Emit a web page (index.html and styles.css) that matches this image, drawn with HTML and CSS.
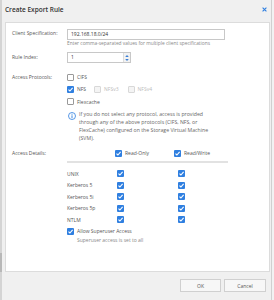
FILE: index.html
```html
<!DOCTYPE html>
<html>
<head>
<meta charset="utf-8">
<link rel="stylesheet" href="styles.css">
</head>
<body>
<div class="dialog">
  <div class="side"></div>
  <div class="main">
    <div class="header">
      <span class="title">Create Export Rule</span>
      <svg class="close" width="5" height="5" viewBox="0 0 5 5"><path d="M0.6 0.6 L4.4 4.4 M4.4 0.6 L0.6 4.4" stroke="#2f7fe0" stroke-width="1.1"/></svg>
    </div>
    <div class="panel">
      <div class="row r-client">
        <div class="label">Client Specification:</div>
        <div class="field">
          <div class="input wide">192.168.18.0/24</div>
          <div class="hint">Enter comma-separated values for multiple client specifications</div>
        </div>
      </div>
      <div class="row r-index">
        <div class="label">Rule Index:</div>
        <div class="field">
          <div class="input narrow"><span class="val">1</span>
            <span class="spin"><svg width="6" height="10" viewBox="0 0 6 10"><path d="M1.2 4 L3 2 L4.8 4Z M1.2 6 L3 8 L4.8 6Z" fill="#3b7fd6"/></svg></span>
          </div>
        </div>
      </div>
      <div class="row r-proto">
        <div class="label">Access Protocols:</div>
        <div class="field">
          <div class="opt"><span class="cb"></span><span>CIFS</span></div>
          <div class="opt"><span class="cb on"><svg viewBox="0 0 7 7"><path d="M1.5 3.6 L2.9 5 L5.6 1.9" fill="none" stroke="#fff" stroke-width="1.1"/></svg></span><span>NFS</span>
            <span class="cb dis sub"></span><span class="dtext">NFSv3</span>
            <span class="cb dis sub2"></span><span class="dtext">NFSv4</span></div>
          <div class="opt"><span class="cb"></span><span>Flexcache</span></div>
          <div class="info">
            <svg class="icon" width="8" height="8" viewBox="0 0 8 8"><circle cx="4" cy="4" r="3.5" fill="none" stroke="#2f7fe0" stroke-width="0.8"/><rect x="3.55" y="3.3" width="0.9" height="2.8" fill="#2f7fe0"/><rect x="3.55" y="1.8" width="0.9" height="0.9" fill="#2f7fe0"/></svg>
            <p>If you do not select any protocol, access is provided<br>through any of the above protocols (CIFS, NFS, or<br>FlexCache) configured on the Storage Virtual Machine<br>(SVM).</p>
          </div>
        </div>
      </div>
      <div class="row r-details">
        <div class="label">Access Details:</div>
        <div class="field">
          <div class="dhead">
            <div class="hcol ro"><span class="cb on"><svg viewBox="0 0 7 7"><path d="M1.5 3.6 L2.9 5 L5.6 1.9" fill="none" stroke="#fff" stroke-width="1.1"/></svg></span><span>Read-Only</span></div>
            <div class="hcol"><span class="cb on"><svg viewBox="0 0 7 7"><path d="M1.5 3.6 L2.9 5 L5.6 1.9" fill="none" stroke="#fff" stroke-width="1.1"/></svg></span><span>Read/Write</span></div>
          </div>
          <div class="drow"><span class="dname">UNIX</span><span class="cb on c1"><svg viewBox="0 0 7 7"><path d="M1.5 3.6 L2.9 5 L5.6 1.9" fill="none" stroke="#fff" stroke-width="1.1"/></svg></span><span class="cb on c2"><svg viewBox="0 0 7 7"><path d="M1.5 3.6 L2.9 5 L5.6 1.9" fill="none" stroke="#fff" stroke-width="1.1"/></svg></span></div>
          <div class="drow"><span class="dname">Kerberos 5</span><span class="cb on c1"><svg viewBox="0 0 7 7"><path d="M1.5 3.6 L2.9 5 L5.6 1.9" fill="none" stroke="#fff" stroke-width="1.1"/></svg></span><span class="cb on c2"><svg viewBox="0 0 7 7"><path d="M1.5 3.6 L2.9 5 L5.6 1.9" fill="none" stroke="#fff" stroke-width="1.1"/></svg></span></div>
          <div class="drow"><span class="dname">Kerberos 5i</span><span class="cb on c1"><svg viewBox="0 0 7 7"><path d="M1.5 3.6 L2.9 5 L5.6 1.9" fill="none" stroke="#fff" stroke-width="1.1"/></svg></span><span class="cb on c2"><svg viewBox="0 0 7 7"><path d="M1.5 3.6 L2.9 5 L5.6 1.9" fill="none" stroke="#fff" stroke-width="1.1"/></svg></span></div>
          <div class="drow"><span class="dname">Kerberos 5p</span><span class="cb on c1"><svg viewBox="0 0 7 7"><path d="M1.5 3.6 L2.9 5 L5.6 1.9" fill="none" stroke="#fff" stroke-width="1.1"/></svg></span><span class="cb on c2"><svg viewBox="0 0 7 7"><path d="M1.5 3.6 L2.9 5 L5.6 1.9" fill="none" stroke="#fff" stroke-width="1.1"/></svg></span></div>
          <div class="drow"><span class="dname">NTLM</span><span class="cb on c1"><svg viewBox="0 0 7 7"><path d="M1.5 3.6 L2.9 5 L5.6 1.9" fill="none" stroke="#fff" stroke-width="1.1"/></svg></span><span class="cb on c2"><svg viewBox="0 0 7 7"><path d="M1.5 3.6 L2.9 5 L5.6 1.9" fill="none" stroke="#fff" stroke-width="1.1"/></svg></span></div>
          <div class="opt su"><span class="cb on"><svg viewBox="0 0 7 7"><path d="M1.5 3.6 L2.9 5 L5.6 1.9" fill="none" stroke="#fff" stroke-width="1.1"/></svg></span><span>Allow Superuser Access</span></div>
          <div class="suhint">Superuser access is set to all</div>
        </div>
      </div>
    </div>
    <div class="footer">
      <button class="btn">OK</button>
      <button class="btn">Cancel</button>
    </div>
  </div>
  <div class="rside"></div>
</div>
</body>
</html>
```
FILE: styles.css
```css
* { box-sizing: border-box; }
html, body { margin: 0; padding: 0; }
body {
  width: 274px;
  height: 300px;
  overflow: hidden;
  background: #f0f0f0;
  font-family: "Open Sans", "DejaVu Sans", sans-serif;
  font-size: 5px;
  color: #555;
}
.dialog { display: flex; height: 300px; }
.side {
  width: 2px;
  flex: none;
  background: linear-gradient(#d4d4d4 0, #d4d4d4 253px, #b8b8b8 253px, #b8b8b8 272px, #d4d4d4 272px);
}
.main { flex: 1; display: flex; flex-direction: column; }
.rside { width: 3px; flex: none; border-left: 1px solid #d0d0d0; background: #f2f2f2; }
.header {
  height: 22px;
  display: flex;
  align-items: center;
  justify-content: space-between;
  padding: 0 3px 3px 3px;
}
.title { font-size: 6.5px; font-weight: 600; color: #333; }
.close { margin-right: 1px; }
.panel {
  margin-left: 3px;
  width: 265px;
  height: 250px;
  background: #fff;
  border: 1px solid #dcdcdc;
  padding: 6px 0 0 6px;
}
.row { display: flex; align-items: flex-start; }
.label { width: 55px; flex: none; line-height: 9px; }
.field { flex: 1; }
.input {
  height: 11px;
  border: 1px solid #c8c8c8;
  font-size: 5px;
  color: #333;
  line-height: 9px;
  padding-left: 3px;
}
.wide { width: 158px; }
.narrow { width: 64px; display: flex; justify-content: space-between; padding-right: 0; }
.spin { width: 7px; height: 9px; display: flex; align-items: center; justify-content: center; background: #f2f2f2; border-left: 1px solid #ddd; }
.hint { font-size: 4.85px; color: #888; line-height: 6px; white-space: nowrap; }
.r-index { margin-top: 6px; }
.r-index .label { line-height: 11px; }
.r-proto { margin-top: 8px; }
.r-proto .label { line-height: 12px; }
.opt { display: flex; align-items: center; height: 12.3px; gap: 3px; }
.cb {
  width: 7px; height: 7px; flex: none;
  border: 1px solid #999; border-radius: 1px; background: #fff;
  display: inline-flex; align-items: center; justify-content: center;
}
.cb svg { width: 7px; height: 7px; display: block; }
.cb.on { background: #2f7fe0; border: none; }
.cb.dis { border-color: #d8d8d8; background: #f4f4f4; }
.cb.sub { margin-left: 5px; }
.cb.sub2 { margin-left: 6px; }
.dtext { color: #bbb; }
.info { display: flex; gap: 3px; margin-top: 2px; align-items: flex-start; }
.info .icon { margin-top: 2px; margin-left: 1px; flex: none; }
.info p { margin: 0; font-size: 5.2px; line-height: 8px; color: #666; white-space: nowrap; }
.r-details { margin-top: 6px; }
.r-details .label { line-height: 11px; }
.dhead {
  display: flex;
  width: 161px;
  height: 15px;
  padding-left: 48px;
  padding-top: 2px;
  border-bottom: 2px solid #e2e2e2;
}
.hcol { display: flex; gap: 3px; height: 7px; align-items: center; }
.hcol.ro { width: 59px; }
.drow { display: flex; align-items: center; height: 11.5px; }
.dhead + .drow { margin-top: 5px; }
.dname { width: 50px; flex: none; }
.c2 { margin-left: 54px; }
.su { margin-top: 1px; height: 10px; }
.suhint { padding-left: 10px; line-height: 8px; color: #888; }
.footer {
  flex: 1;
  display: flex;
  justify-content: flex-end;
  align-items: flex-start;
  gap: 3px;
  padding: 7px 5px 0 0;
}
.btn {
  font-family: inherit;
  font-size: 5px;
  color: #555;
  width: 41px;
  height: 13px;
  background: #f7f7f7;
  border: 1px solid #d0d0d0;
  border-radius: 0;
  padding: 0;
}
.btn + .btn { width: 42px; }
```
